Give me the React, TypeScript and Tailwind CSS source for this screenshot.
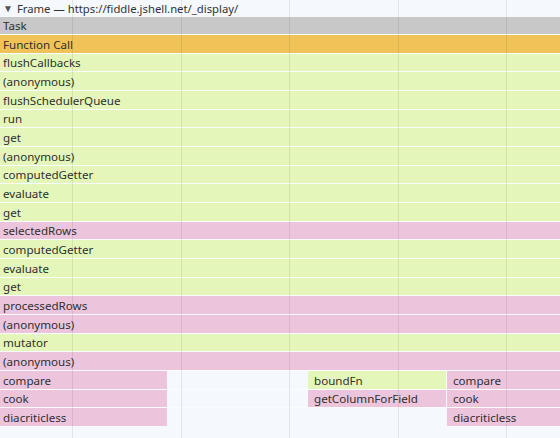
import React from "react";

type Bar = { label: string; color: string };

const G = "bg-[#e4f6ba]";
const P = "bg-[#ecc4dc]";

const rows: Bar[] = [
  { label: "Task", color: "bg-[#c8c8c8]" },
  { label: "Function Call", color: "bg-[#efc357]" },
  { label: "flushCallbacks", color: G },
  { label: "(anonymous)", color: G },
  { label: "flushSchedulerQueue", color: G },
  { label: "run", color: G },
  { label: "get", color: G },
  { label: "(anonymous)", color: G },
  { label: "computedGetter", color: G },
  { label: "evaluate", color: G },
  { label: "get", color: G },
  { label: "selectedRows", color: P },
  { label: "computedGetter", color: G },
  { label: "evaluate", color: G },
  { label: "get", color: G },
  { label: "processedRows", color: P },
  { label: "(anonymous)", color: P },
  { label: "mutator", color: G },
  { label: "(anonymous)", color: P },
];

function BarBox({ label, color, className }: { label: string; color: string; className: string }) {
  return (
    <div className={`${color} ${className} h-full flex items-center pt-[1px] pl-[3px] overflow-hidden whitespace-nowrap text-[#303030]`}>
      {label}
    </div>
  );
}

export default function App() {
  const lines = [72, 181, 289, 398, 506];
  return (
    <div
      className="relative w-[560px] h-[438px] overflow-hidden bg-[#f5f8fd] text-[11.6px] leading-none"
      style={{ fontFamily: '"Noto Sans", "Open Sans", sans-serif' }}
    >
      <div className="h-[16.5px] flex items-center pl-[3px] text-[#333] text-[11.3px] bg-[#f5f8fd]">
        <span className="text-[10px] mr-[4px] text-[#555]">▼</span>
        <span>Frame — https://fiddle.jshell.net/_display/</span>
      </div>
      <div className="flex flex-col gap-[1px] bg-[#fbfcff]">
        {rows.map((r, i) => (
          <div key={i} className="h-[17.67px] flex">
            <BarBox label={r.label} color={r.color} className="w-full" />
          </div>
        ))}
        <div className="h-[17.67px] flex bg-[#f5f8fd]">
          <BarBox label="compare" color={P} className="w-[167px]" />
          <div className="w-[141px]" />
          <BarBox label="boundFn" color={G} className="w-[138px] pl-[6px]" />
          <div className="w-[1px] bg-[#fbfcff]" />
          <BarBox label="compare" color={P} className="flex-1 pl-[6px]" />
        </div>
        <div className="h-[17.67px] flex bg-[#f5f8fd]">
          <BarBox label="cook" color={P} className="w-[167px]" />
          <div className="w-[141px]" />
          <BarBox label="getColumnForField" color={P} className="w-[138px] pl-[6px]" />
          <div className="w-[1px] bg-[#fbfcff]" />
          <BarBox label="cook" color={P} className="flex-1 pl-[6px]" />
        </div>
        <div className="h-[17.67px] flex bg-[#f5f8fd]">
          <BarBox label="diacriticless" color={P} className="w-[167px]" />
          <div className="w-[280px]" />
          <BarBox label="diacriticless" color={P} className="flex-1 pl-[6px]" />
        </div>
      </div>
      {lines.map((x) => (
        <div
          key={x}
          className="absolute top-0 bottom-0 w-[1px] bg-[rgba(0,0,0,0.08)]"
          style={{ left: x }}
        />
      ))}
    </div>
  );
}
